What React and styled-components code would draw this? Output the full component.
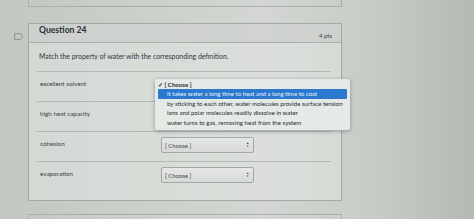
import React from 'react';
import styled, { createGlobalStyle } from 'styled-components';

const GlobalStyle = createGlobalStyle`
  html, body {
    margin: 0;
    padding: 0;
  }
  body {
    width: 474px;
    height: 219px;
    overflow: hidden;
    background: linear-gradient(90deg, #c3c7c2 0%, #ccd0cb 30%, #d3d6d2 55%, #c7cbc6 80%, #b5b9b4 100%);
    font-family: Lato, "Open Sans", sans-serif;
    color: #30363c;
  }
`;

const rows = [
  { label: 'excellent solvent' },
  { label: 'high heat capacity' },
  { label: 'cohesion', select: true },
  { label: 'evaporation', select: true },
];

const options = [
  'it takes water a long time to heat and a long time to cool',
  'by sticking to each other, water molecules provide surface tension',
  'ions and polar molecules readily dissolve in water',
  'water turns to gas, removing heat from the system',
];

const FlagIcon = () => (
  <svg width="9" height="7" viewBox="0 0 9 7">
    <path d="M0.6 0.6 H5.6 Q8.4 0.6 8.4 3.5 Q8.4 6.4 5.6 6.4 H0.6 Z" fill="none" stroke="#8d9390" strokeWidth="1" />
  </svg>
);

export default function App() {
  return (
    <>
      <GlobalStyle />
      <Page>
        <PrevCard />
        <QuestionRow>
          <IconCol>
            <FlagIcon />
          </IconCol>
          <Card>
            <Header>
              <Title>Question 24</Title>
              <Points>4 pts</Points>
            </Header>
            <Body>
              <Prompt>Match the property of water with the corresponding definition.</Prompt>
              <Rows>
                {rows.map((r) => (
                  <Row key={r.label}>
                    <Label>{r.label}</Label>
                    {r.select && (
                      <Select>
                        <span>[ Choose ]</span>
                        <Arrows>
                          <i>▲</i>
                          <i>▼</i>
                        </Arrows>
                      </Select>
                    )}
                  </Row>
                ))}
                <Menu>
                  <MenuItem $checked>✓ [ Choose ]</MenuItem>
                  {options.map((o, i) => (
                    <MenuItem key={o} $active={i === 0}>{o}</MenuItem>
                  ))}
                </Menu>
              </Rows>
            </Body>
          </Card>
        </QuestionRow>
        <NextCard />
      </Page>
    </>
  );
}

const Page = styled.div`
  display: flex;
  flex-direction: column;
  width: 474px;
`;

const PrevCard = styled.div`
  margin-left: 28px;
  width: 312px;
  height: 6px;
  border: 1px solid #a9aeaa;
  border-top: none;
`;

const QuestionRow = styled.div`
  display: flex;
  margin-top: 16px;
`;

const IconCol = styled.div`
  width: 14px;
  padding: 1px 0 0 14px;
`;

const Card = styled.div`
  width: 312px;
  height: 176px;
  border: 1px solid #a3a8a4;
  background: rgba(226, 229, 225, 0.55);
  display: flex;
  flex-direction: column;
`;

const Header = styled.div`
  height: 18px;
  display: flex;
  align-items: center;
  justify-content: space-between;
  padding: 0 9px 0 10px;
  background: rgba(200, 204, 200, 0.6);
  border-bottom: 1px solid #a9aeaa;
`;

const Title = styled.div`
  font-size: 8.6px;
  font-weight: 700;
  color: #2a3036;
  margin-top: -6px;
`;

const Points = styled.div`
  font-size: 6px;
  color: #3a4046;
  margin-top: 4px;
`;

const Body = styled.div`
  display: flex;
  flex-direction: column;
  padding: 0 10px 0 8px;
`;

const Prompt = styled.div`
  font-size: 6.9px;
  color: #30363c;
  height: 28px;
  line-height: 1;
  padding: 10px 0 0 2px;
  box-sizing: border-box;
`;

const Rows = styled.div`
  position: relative;
  display: flex;
  flex-direction: column;
`;

const Row = styled.div`
  height: 30px;
  border-top: 1px solid #b4b9b5;
  display: flex;
  align-items: flex-start;
  box-sizing: border-box;
`;

const Label = styled.div`
  width: 121px;
  padding: 8px 0 0 3px;
  font-size: 6.3px;
  color: #3c4247;
`;

const Select = styled.div`
  margin-top: 5px;
  width: 93px;
  height: 16px;
  box-sizing: border-box;
  border: 1px solid #a3a8a5;
  border-radius: 2px;
  background: linear-gradient(180deg, #e6e8e6 0%, #d6d9d6 100%);
  display: flex;
  align-items: center;
  justify-content: space-between;
  padding: 0 4px 0 3px;
  font-size: 5.9px;
  color: #3e4449;
`;

const Arrows = styled.div`
  display: flex;
  flex-direction: column;
  line-height: 1;
  i {
    font-style: normal;
    font-size: 2.8px;
    color: #22272c;
  }
`;

const Menu = styled.div`
  position: absolute;
  left: 118px;
  top: 8px;
  width: 195px;
  padding: 1px 3px 3px;
  box-sizing: border-box;
  background: rgba(231, 234, 232, 0.95);
  border-radius: 3px;
  box-shadow: 0 1px 4px rgba(60, 66, 64, 0.45);
  display: flex;
  flex-direction: column;
`;

const MenuItem = styled.div`
  height: ${(p) => (p.$checked ? '9px' : '9.6px')};
  line-height: ${(p) => (p.$checked ? '9px' : '9.6px')};
  padding-left: ${(p) => (p.$checked ? '0' : '9px')};
  font-size: 6.1px;
  font-weight: ${(p) => (p.$checked ? 700 : 400)};
  white-space: nowrap;
  border-radius: 1px;
  color: ${(p) => (p.$active ? '#eef4fb' : '#262b30')};
  background: ${(p) => (p.$active ? '#2b78cf' : 'transparent')};
`;

const NextCard = styled.div`
  margin: 13px 0 0 28px;
  width: 312px;
  height: 5px;
  border: 1px solid #a9aeaa;
  border-bottom: none;
`;
